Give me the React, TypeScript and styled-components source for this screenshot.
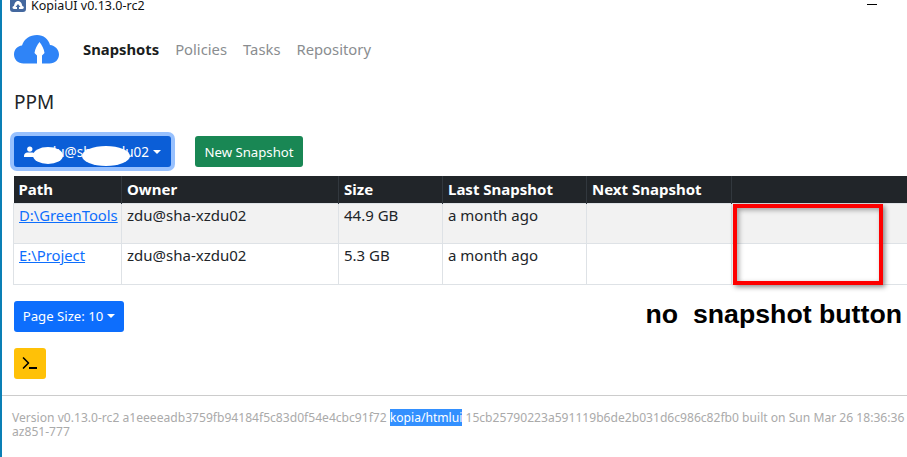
import styled, { createGlobalStyle } from 'styled-components'
import { ChevronRight } from 'lucide-react'

const GlobalStyle = createGlobalStyle`
  html, body {
    margin: 0;
    padding: 0;
    width: 907px;
    height: 457px;
    overflow: hidden;
    background: #fff;
  }
  body {
    font-family: 'Noto Sans', 'Open Sans', sans-serif;
    color: #212529;
  }
  * {
    box-sizing: border-box;
  }
`

const rows = [
  { path: 'D:\\GreenTools', owner: 'zdu@sha-xzdu02', size: '44.9 GB', last: 'a month ago' },
  { path: 'E:\\Project', owner: 'zdu@sha-xzdu02', size: '5.3 GB', last: 'a month ago' },
]

const columns = ['Path', 'Owner', 'Size', 'Last Snapshot', 'Next Snapshot', '']
const columnWidths = [108, 217, 104, 144, 145, 189]

const CloudLogo = () => (
  <svg width="45" height="29" viewBox="0 0 45 29">
    <path
      fill="#2f84f7"
      d="M9.500 28.500C4 28.500 0 24.500 0 19.500c0-5 3.500-8.500 8-9C10 4 16 0 23 0c6.500 0 11.500 4 13 10 5 .5 9 4.500 9 9.500 0 5-4 9-9.500 9H28v-8l2.500-2.500C30 14 28 10 25.500 7c-2.500 3-4.500 7-5 11l2.500 2.500v8z"
    />
  </svg>
)

const WindowIcon = () => (
  <svg width="16" height="12" viewBox="0 0 16 12">
    <path fill="#44689f" d="M0 0h16v9q0 3-3 3H3q-3 0-3-3z" />
    <path fill="#fff" d="M4 9C2 9 2 6 4 6c.5-2.500 1.500-5 4-5s4 2.500 4.300 5c2 0 2 3 0 3H9V7h1.500L8 4 5.500 7H7v2z" />
  </svg>
)

const UserIcon = () => (
  <svg width="14" height="14" viewBox="0 0 14 14">
    <circle cx="7" cy="3.500" r="3.200" fill="#fff" />
    <path fill="#fff" d="M0 13v-1.500C0 9 2 7.500 4 7.500h6c2 0 4 1.500 4 4V13z" />
  </svg>
)

const App = () => {
  return (
    <Window>
      <GlobalStyle />
      <TitleBar>
        <WindowIcon />
        <TitleText>KopiaUI v0.13.0-rc2</TitleText>
        <Minimize />
      </TitleBar>
      <Content>
        <Nav>
          <CloudLogo />
          <NavLinks>
            <NavLink $active>Snapshots</NavLink>
            <NavLink>Policies</NavLink>
            <NavLink>Tasks</NavLink>
            <NavLink>Repository</NavLink>
          </NavLinks>
        </Nav>
        <Heading>PPM</Heading>
        <Toolbar>
          <UserButton>
            <UserIcon />
            <span>zdu@sha-xzdu02</span>
            <Caret />
            <ScribbleLeft />
            <ScribbleRight />
          </UserButton>
          <Button $color="#198754" $width={108}>
            New Snapshot
          </Button>
        </Toolbar>
        <TableArea>
          <Table>
            <colgroup>
              {columnWidths.map((width, i) => (
                <col key={i} style={{ width }} />
              ))}
            </colgroup>
            <thead>
              <tr>
                {columns.map((column, i) => (
                  <HeadCell key={i}>{column}</HeadCell>
                ))}
              </tr>
            </thead>
            <tbody>
              {rows.map((row, i) => (
                <Row key={row.path} $striped={i === 0}>
                  <Cell>
                    <PathLink>{row.path}</PathLink>
                  </Cell>
                  <Cell>{row.owner}</Cell>
                  <Cell>{row.size}</Cell>
                  <Cell>{row.last}</Cell>
                  <Cell />
                  <Cell />
                </Row>
              ))}
            </tbody>
          </Table>
          <RedBox />
        </TableArea>
        <PagerRow>
          <Button $color="#0d6efd" $width={110}>
            Page Size: 10
            <Caret />
          </Button>
          <Annotation>no&nbsp; snapshot button</Annotation>
        </PagerRow>
        <TerminalButton>
          <ChevronRight size={20} strokeWidth={2} color="#000" />
          <TerminalLine />
        </TerminalButton>
      </Content>
      <Footer>
        Version v0.13.0-rc2 a1eeeeadb3759fb94184f5c83d0f54e4cbc91f72 <Selected>kopia/htmlui</Selected>{' '}
        15cb25790223a591119b6de2b031d6c986c82fb0 built on Sun Mar 26 18:36:36 az851-777
      </Footer>
    </Window>
  )
}

const Window = styled.div`
  width: 907px;
  height: 457px;
  overflow: hidden;
  border-left: 2px solid #0a7fb5;
`

const TitleBar = styled.div`
  height: 14px;
  display: flex;
  align-items: flex-start;
  padding-left: 8px;
  overflow: hidden;
`

const TitleText = styled.div`
  margin-left: 5px;
  font-size: 12.500px;
  line-height: 12px;
  color: #111;
`

const Minimize = styled.div`
  width: 10px;
  height: 1px;
  margin: 4px 30px 0 auto;
  background: #000;
`

const Content = styled.div`
  padding: 0 0 0 12px;
`

const Nav = styled.nav`
  display: flex;
  align-items: center;
  height: 46px;
  margin-top: 12px;
`

const NavLinks = styled.div`
  display: flex;
  gap: 16px;
  margin-left: 24px;
`

const NavLink = styled.a<{ $active?: boolean }>`
  font-size: 14.800px;
  line-height: 20px;
  font-weight: ${(p) => (p.$active ? 700 : 400)};
  color: ${(p) => (p.$active ? '#1a1d20' : '#8a8d90')};
`

const Heading = styled.h1`
  margin: 18px 0 0;
  height: 24px;
  font-size: 19px;
  line-height: 24px;
  font-weight: 400;
`

const Toolbar = styled.div`
  display: flex;
  gap: 24px;
  margin-top: 22px;
`

const Button = styled.button<{ $color: string; $width: number }>`
  display: inline-flex;
  align-items: center;
  justify-content: center;
  width: ${(p) => p.$width}px;
  height: 31px;
  padding: 0;
  border: 0;
  border-radius: 3px;
  background: ${(p) => p.$color};
  color: #fff;
  font-family: inherit;
  font-size: 13.200px;
`

const UserButton = styled.button`
  position: relative;
  display: inline-flex;
  align-items: center;
  width: 157px;
  height: 31px;
  padding: 0 10px;
  border: 0;
  border-radius: 3px;
  background: #0b5ed7;
  box-shadow: 0 0 0 4px #98c1fe;
  color: #fff;
  font-family: inherit;
  font-size: 13.500px;
  white-space: nowrap;

  svg {
    margin-right: 6px;
  }
`

const Caret = styled.span`
  display: inline-block;
  margin-left: 4px;
  border-top: 4px solid #fff;
  border-left: 4px solid transparent;
  border-right: 4px solid transparent;
`

const ScribbleLeft = styled.span`
  position: absolute;
  left: 19px;
  top: 11px;
  width: 30px;
  height: 17px;
  border-radius: 50%;
  background: #fff;
`

const ScribbleRight = styled.span`
  position: absolute;
  left: 68px;
  top: 10px;
  width: 48px;
  height: 20px;
  border-radius: 50%;
  background: #fff;
`

const TableArea = styled.div`
  position: relative;
  margin-top: 9px;
`

const Table = styled.table`
  width: 907px;
  margin-left: -1px;
  table-layout: fixed;
  border-collapse: collapse;
`

const HeadCell = styled.th`
  height: 27px;
  padding: 0 5px 1px;
  text-align: left;
  font-size: 15px;
  font-weight: 700;
  color: #fff;
  background: #212529;
  border-right: 1px solid #32383e;
`

const Row = styled.tr<{ $striped: boolean }>`
  height: ${(p) => (p.$striped ? 40 : 41)}px;
  background: ${(p) => (p.$striped ? '#f2f2f2' : '#fff')};
`

const Cell = styled.td`
  padding: 1px 5px 0;
  vertical-align: top;
  font-size: 15px;
  line-height: 20px;
  border: 1px solid #dee2e6;
  white-space: nowrap;
  overflow: hidden;
`

const PathLink = styled.a`
  font-size: 14.800px;
  color: #0d6efd;
  text-decoration: underline;
`

const RedBox = styled.div`
  position: absolute;
  left: 719px;
  top: 28px;
  width: 150px;
  height: 81px;
  border: 4px solid #fe0000;
  box-shadow: 2px 2px 5px rgba(0, 0, 0, 0.45), inset 2px 2px 5px rgba(0, 0, 0, 0.35);
`

const PagerRow = styled.div`
  display: flex;
  align-items: center;
  justify-content: space-between;
  margin-top: 16px;
  padding-right: 5px;
`

const Annotation = styled.div`
  margin-bottom: 4px;
  font-family: 'Liberation Sans', Arial, sans-serif;
  font-size: 26.700px;
  line-height: 24px;
  font-weight: 700;
  color: #000;
  white-space: nowrap;
`

const TerminalButton = styled.button`
  display: flex;
  align-items: center;
  justify-content: center;
  width: 32px;
  height: 31px;
  margin-top: 16px;
  padding: 0;
  border: 0;
  border-radius: 3px;
  background: #ffc107;

  svg {
    margin: 0 -7px;
  }
`

const TerminalLine = styled.span`
  width: 8px;
  height: 2px;
  margin-top: 10px;
  background: #000;
`

const Footer = styled.footer`
  margin-top: 16px;
  padding: 15px 0 0 10px;
  border-top: 1px solid #ccc;
  font-size: 12.100px;
  line-height: 14px;
  color: #aaa;
  width: 905px;
`

const Selected = styled.span`
  background: #3390ff;
  color: #fff;
`

export default App
